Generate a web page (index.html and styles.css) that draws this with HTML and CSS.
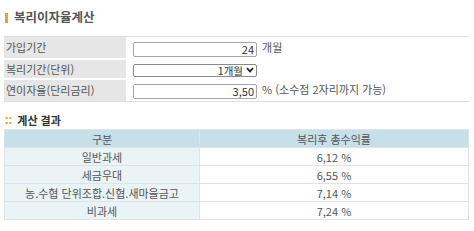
FILE: index.html
```html
<!DOCTYPE html>
<html lang="ko">
<head>
    <meta charset="UTF-8">
    <title>복리이자율계산</title>
    <link rel="stylesheet" href="styles.css">
</head>
<body>
    <div class="wrap">
        <h3 class="title"><span class="bar"></span>복리이자율계산</h3>

        <!-- 입력 -->
        <table class="form">
            <tr class="r1">
                <th>가입기간</th>
                <td><input type="text" class="num" value="24"> 개월</td>
            </tr>
            <tr class="r2">
                <th>복리기간(단위)</th>
                <td>
                    <span class="sel">
                        <select class="unit">
                            <option>1개월</option>
                            <option>3개월</option>
                            <option>6개월</option>
                            <option>12개월</option>
                        </select>
                        <svg class="arrow" width="8" height="6" viewBox="0 0 8 6">
                            <path d="M1 1.2 L4 4.4 L7 1.2" fill="none" stroke="#222" stroke-width="1.8"/>
                        </svg>
                    </span>
                </td>
            </tr>
            <tr class="r3">
                <th>연이자율(단리금리)</th>
                <td><input type="text" class="num" value="3,50"> % (소수점 2자리까지 가능)</td>
            </tr>
        </table>

        <!-- 결과 -->
        <h4 class="sub"><span class="dots">::</span> 계산 결과</h4>
        <table class="result">
            <tr>
                <th class="c1">구분</th>
                <th>복리후 총수익률</th>
            </tr>
            <tr>
                <td class="c1">일반과세</td>
                <td>6,12 %</td>
            </tr>
            <tr>
                <td class="c1">세금우대</td>
                <td>6,55 %</td>
            </tr>
            <tr>
                <td class="c1">농.수협 단위조합.신협.새마을금고</td>
                <td>7,14 %</td>
            </tr>
            <tr>
                <td class="c1">비과세</td>
                <td>7,24 %</td>
            </tr>
        </table>
    </div>
</body>
</html>
```

FILE: styles.css
```css
body {
    margin: 0;
    background: #fff;
    font-family: "Noto Sans CJK KR", "DejaVu Sans", sans-serif;
    font-size: 11px;
    color: #555;
}

.wrap {
    width: 466px;
    padding: 0 4px;
}

.title {
    margin: 0;
    padding: 9px 0 11px 1px;
    height: 16px;
    line-height: 16px;
    font-size: 12.5px;
    font-weight: bold;
    color: #555;
}

.bar {
    display: inline-block;
    width: 3px;
    height: 10px;
    margin-right: 6px;
    vertical-align: -1px;
    background: #f0a030;
}

.form {
    width: 465px;
    border-collapse: collapse;
    border-top: 1px solid #dedede;
    border-bottom: 1px solid #dedede;
}

.form th {
    width: 120px;
    padding: 0 0 0 2px;
    text-align: left;
    font-weight: normal;
    background: #e6e6e6;
    color: #555;
    border-bottom: 2px solid #fff;
}

.form tr:last-child th {
    border-bottom: 0;
}

.form td {
    padding: 0 0 0 7px;
    color: #555;
}

.form .r1 { height: 22px; }
.form .r2 { height: 20px; }
.form .r3 { height: 23px; }

.num {
    box-sizing: border-box;
    width: 124px;
    height: 15px;
    margin: 0 2px 0 0;
    padding: 0 2px;
    border: 1px solid #a6a6a6;
    border-radius: 2px;
    font-family: inherit;
    font-size: 11px;
    color: #333;
    text-align: right;
    vertical-align: middle;
}

/* 선택 상자 */
.sel {
    position: relative;
    display: inline-block;
    vertical-align: middle;
}

.unit {
    display: block;
    box-sizing: border-box;
    width: 124px;
    height: 13px;
    padding: 0 13px 0 0;
    border: 1px solid #8a8a8a;
    border-radius: 2px;
    appearance: none;
    -webkit-appearance: none;
    background: #fff;
    font-family: inherit;
    font-size: 10.5px;
    line-height: 11px;
    color: #333;
    text-align-last: right;
}

.arrow {
    position: absolute;
    right: 3px;
    top: 3px;
}

.sub {
    margin: 10px 0 0 1px;
    height: 17px;
    line-height: 16px;
    font-size: 11px;
    font-weight: bold;
    color: #333;
}

.dots {
    color: #d8a030;
    margin-right: 2px;
}

.result {
    width: 465px;
    border-collapse: collapse;
    border: 1px solid #dde3e6;
}

.result th,
.result td {
    height: 17px;
    padding: 0;
    text-align: center;
    border-bottom: 1px solid #dde3e6;
    color: #555;
}

.result th {
    font-weight: normal;
    background: #c6dfe8;
}

.result .c1 {
    width: 194px;
    border-right: 1px solid #dde3e6;
}

.result td.c1 {
    background: #eaf3f6;
}
```
